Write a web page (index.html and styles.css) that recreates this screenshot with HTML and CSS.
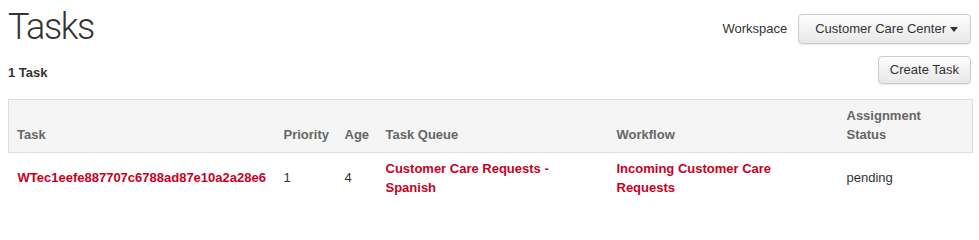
FILE: index.html
```html
<!DOCTYPE html>
<html>
<head>
<meta charset="utf-8">
<link rel="stylesheet" href="styles.css">
</head>
<body>
<div class="page">
  <div class="topbar">
    <h1 class="title">Tasks</h1>
    <div class="workspace">
      <span class="ws-label">Workspace</span>
      <button class="btn btn-dropdown">Customer Care Center <span class="caret"></span></button>
    </div>
  </div>
  <div class="subbar">
    <span class="count">1 Task</span>
    <button class="btn btn-create">Create Task</button>
  </div>
  <table class="tasks">
    <colgroup>
      <col class="c-task">
      <col class="c-prio">
      <col class="c-age">
      <col class="c-queue">
      <col class="c-flow">
      <col class="c-status">
    </colgroup>
    <thead>
      <tr>
        <th>Task</th>
        <th>Priority</th>
        <th>Age</th>
        <th>Task Queue</th>
        <th>Workflow</th>
        <th>Assignment Status</th>
      </tr>
    </thead>
    <tbody>
      <tr>
        <td><a class="link" href="#">WTec1eefe887707c6788ad87e10a2a28e6</a></td>
        <td>1</td>
        <td>4</td>
        <td><a class="link" href="#">Customer Care Requests - Spanish</a></td>
        <td><a class="link" href="#">Incoming Customer Care Requests</a></td>
        <td>pending</td>
      </tr>
    </tbody>
  </table>
</div>
</body>
</html>
```
FILE: styles.css
```css
html, body {
  margin: 0;
  padding: 0;
  background: #fff;
}
body {
  font-family: "Liberation Sans", Arial, Helvetica, sans-serif;
  font-size: 13px;
  line-height: 18.57px;
  color: #333;
}
.page {
  padding: 5px 8px 0 8px;
}
.topbar {
  display: flex;
  justify-content: space-between;
  align-items: flex-start;
}
.title {
  margin: 2px 0 0 0;
  font-family: Roboto, "Liberation Sans", Arial, sans-serif;
  font-size: 36px;
  line-height: 40px;
  font-weight: 300;
  color: #333;
  letter-spacing: -1.4px;
}
.workspace {
  display: flex;
  align-items: center;
  gap: 11px;
  margin-top: 9px;
}
.ws-label {
  color: #333;
}
.btn {
  font-family: inherit;
  font-size: 13px;
  line-height: 18px;
  color: #333;
  border: 1px solid #ccc;
  border-radius: 4px;
  background: linear-gradient(to bottom, #fdfdfd 0%, #e8e8e8 100%);
  box-shadow: 0 1px 1px rgba(0, 0, 0, 0.08);
  padding: 5px 12px;
  margin: 0;
  cursor: pointer;
  display: inline-flex;
  align-items: center;
}
.btn-dropdown {
  height: 30px;
  padding: 0 12px 0 16px;
}
.btn-create {
  height: 28px;
  padding: 0 11px;
}
.caret {
  display: inline-block;
  width: 0;
  height: 0;
  margin-left: 4px;
  border-top: 5px solid #333;
  border-left: 4px solid transparent;
  border-right: 4px solid transparent;
}
.subbar {
  display: flex;
  justify-content: space-between;
  align-items: center;
  margin-top: 9px;
}
.count {
  font-weight: bold;
  padding-top: 7px;
}
.tasks {
  margin-top: 15px;
  width: 964px;
  table-layout: fixed;
  border-collapse: collapse;
}
.c-task { width: 267px; }
.c-prio { width: 61px; }
.c-age { width: 41px; }
.c-queue { width: 231px; }
.c-flow { width: 230px; }
.c-status { width: 134px; }
.tasks th {
  background: #f5f5f5;
  color: #666;
  font-weight: bold;
  text-align: left;
  vertical-align: bottom;
  padding: 7px 8px 8px 8px;
  border-top: 1px solid #ddd;
  border-bottom: 1px solid #ddd;
}
.tasks th:first-child {
  border-left: 1px solid #ddd;
  padding-left: 8px;
}
.tasks th:last-child {
  border-right: 1px solid #ddd;
}
.tasks td {
  padding: 7px 8px 9px 8px;
  vertical-align: middle;
  color: #333;
}
.tasks td:first-child {
  padding-left: 9px;
}
.link {
  color: #c8001e;
  font-weight: bold;
  text-decoration: none;
}
```
